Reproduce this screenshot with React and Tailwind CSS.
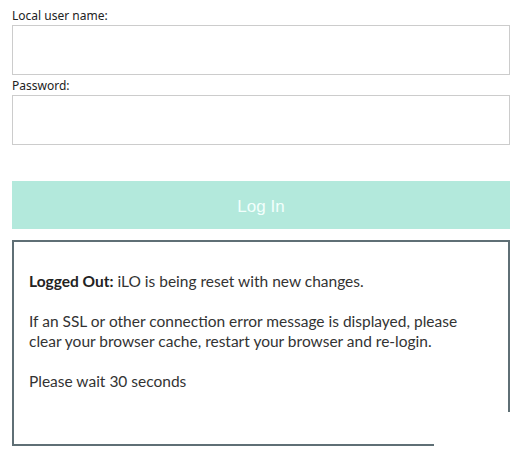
import React from 'react';

const App = () => {
  return (
    <div className="w-[522px] h-[453px] bg-white px-3 pt-[8px] overflow-hidden">
      <label className="block text-[12px] leading-[16px] mb-[1px] text-[#222] font-['Noto_Sans',sans-serif]">
        Local user name:
      </label>
      <input
        type="text"
        className="block w-full h-[50px] border border-[#cccccc] bg-white outline-none"
      />
      <label className="block text-[12px] leading-[16px] mt-[3px] mb-[1px] text-[#222] font-['Noto_Sans',sans-serif]">
        Password:
      </label>
      <input
        type="password"
        className="block w-full h-[50px] border border-[#cccccc] bg-white outline-none"
      />

      <button className="mt-9 w-full h-12 pt-[3px] bg-[#b3e9dc] text-[#f2fffc] text-[17px] font-['Liberation_Sans',Arial,sans-serif]">
        Log In
      </button>

      <div className="relative mt-[11px] h-[206px] border-2 border-[#5f6f75] pl-[15px] pr-[40px] pt-[29px] text-[15.5px] leading-5 text-[#333] font-['Lato',sans-serif]">
        <p>
          <span className="font-bold text-[#222]">Logged Out:</span> iLO is being reset with new changes.
        </p>
        <p className="mt-5">
          If an SSL or other connection error message is displayed, please clear your browser cache, restart your browser and re-login.
        </p>
        <p className="mt-5">Please wait 30 seconds</p>
        <div className="absolute -right-[2px] -bottom-[2px] w-[76px] h-[34px] bg-white" />
      </div>
    </div>
  );
};

export default App;
